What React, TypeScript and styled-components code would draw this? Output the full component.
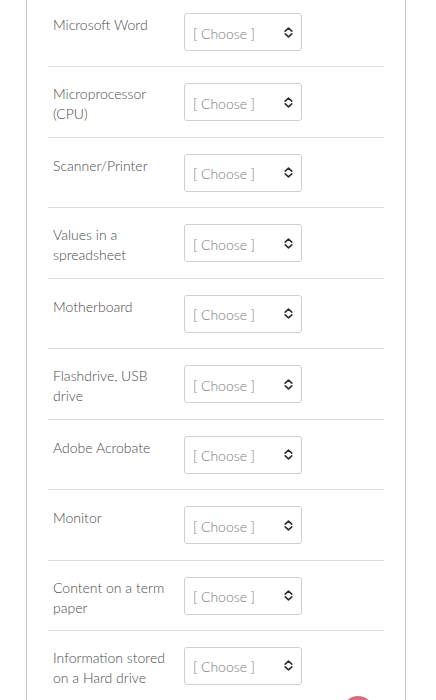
import React from 'react';
import styled, { createGlobalStyle } from 'styled-components';

const GlobalStyle = createGlobalStyle`
  html, body {
    margin: 0;
    padding: 0;
    background: #ffffff;
    overflow: hidden;
  }
  body {
    font-family: Lato, "Open Sans", "Liberation Sans", sans-serif;
  }
`;

const Page = styled.div`
  width: 436px;
  height: 700px;
  overflow: hidden;
  position: relative;
  background: #ffffff;
`;

const Panel = styled.div`
  margin: -3px 0 0 26px;
  width: 380px;
  border-left: 1px solid #c4c4c4;
  border-right: 1px solid #c4c4c4;
  padding: 0 21px 0 21px;
  box-sizing: border-box;
`;

const Row = styled.div`
  display: flex;
  align-items: flex-start;
  gap: 13px;
  height: 70.44px;
  box-sizing: border-box;
  padding: 16px 0 0 5px;
  border-bottom: 1px solid #dcdcdc;
`;

const Label = styled.div<{ $lines: number }>`
  width: 118px;
  flex-shrink: 0;
  padding-top: ${p => (p.$lines > 1 ? 1 : 2)}px;
  font-size: 14px;
  font-weight: 300;
  line-height: 20px;
  color: #4a4a4a;
`;

const Select = styled.div`
  width: 118px;
  height: 38px;
  box-sizing: border-box;
  border: 1px solid #cfcfcf;
  border-radius: 3px;
  display: flex;
  align-items: center;
  justify-content: space-between;
  padding: 0 8px 0 8px;
  background: #ffffff;
`;

const Placeholder = styled.span`
  font-size: 14px;
  font-weight: 300;
  color: #7a7a7a;
  padding-top: 2px;
`;

const Badge = styled.div`
  position: absolute;
  left: 342px;
  top: 696px;
  width: 32px;
  height: 32px;
  border-radius: 50%;
  background: #d96b7f;
`;

const Chevrons = () => (
  <svg width="9" height="11" viewBox="0 0 9 11" fill="none">
    <path d="M1.2 4.2 L4.5 1.2 L7.8 4.2" stroke="#2d2d2d" strokeWidth="1.6" strokeLinecap="round" strokeLinejoin="round" />
    <path d="M1.2 6.8 L4.5 9.8 L7.8 6.8" stroke="#2d2d2d" strokeWidth="1.6" strokeLinecap="round" strokeLinejoin="round" />
  </svg>
);

const items: [string, number][] = [
  ['Microsoft Word', 1],
  ['Microprocessor (CPU)', 2],
  ['Scanner/Printer', 1],
  ['Values in a spreadsheet', 2],
  ['Motherboard', 1],
  ['Flashdrive, USB drive', 2],
  ['Adobe Acrobate', 1],
  ['Monitor', 1],
  ['Content on a term paper', 2],
  ['Information stored on a Hard drive', 2],
];

const App = () => (
  <Page>
    <GlobalStyle />
    <Panel>
      {items.map(([item, lines]) => (
        <Row key={item}>
          <Label $lines={lines}>{item}</Label>
          <Select>
            <Placeholder>[ Choose ]</Placeholder>
            <Chevrons />
          </Select>
        </Row>
      ))}
    </Panel>
    <Badge />
  </Page>
);

export default App;
